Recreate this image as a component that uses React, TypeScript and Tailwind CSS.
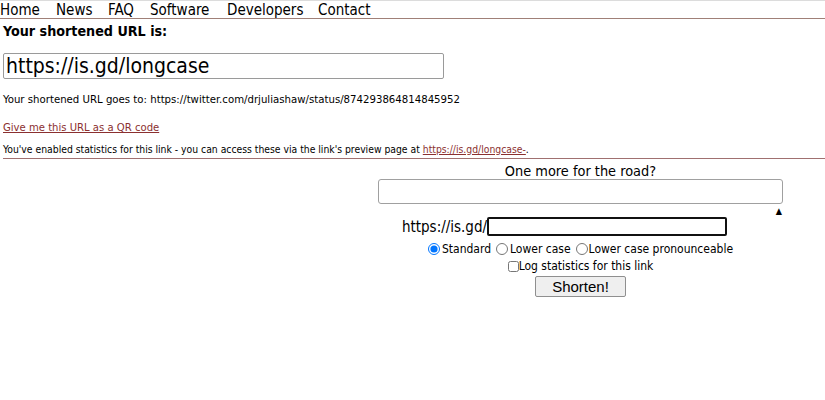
import React from "react";

const cond: React.CSSProperties = {
  fontFamily: '"DejaVu Sans Condensed", "DejaVu Sans", Tahoma, sans-serif',
  fontStretch: "condensed",
};

export default function App() {
  return (
    <div className="w-[825px] h-[400px] bg-white overflow-hidden text-black" style={cond}>
      <div className="border-t border-[#dcdcdc]" />
      <nav className="flex h-[18px] items-center border-b border-[#a08078] text-[15px] leading-[18px]">
        <a className="w-[56px]">Home</a>
        <a className="w-[52px]">News</a>
        <a className="w-[42px]">FAQ</a>
        <a className="w-[77px]">Software</a>
        <a className="w-[91px]">Developers</a>
        <a>Contact</a>
      </nav>
      <div className="px-[3px]">
        <h2 className="mt-[4px] text-[14.2px] font-bold leading-[17px]">Your shortened URL is:</h2>
        <input
          readOnly
          value="https://is.gd/longcase"
          style={cond}
          className="mt-[13px] block h-[26px] w-[441px] rounded-[2px] border border-[#9a9a9a] px-[2px] text-[21px] leading-[24px] outline-none"
        />
        <p className="mt-[14px] text-[11.3px] leading-[14px]">
          Your shortened URL goes to: https://twitter.com/drjuliashaw/status/874293864814845952
        </p>
        <p className="mt-[14px] text-[11.2px] leading-[14px]">
          <a className="text-[#8b3030] underline">Give me this URL as a QR code</a>
        </p>
        <p className="mt-[7px] text-[10.3px] leading-[14px]">
          You've enabled statistics for this link - you can access these via the link's preview page at{" "}
          <a className="text-[#8b3030] underline">https://is.gd/longcase-</a>.
        </p>
      </div>
      <div className="ml-[3px] mt-[2px] border-t border-[#a07070]" />
      <form className="ml-[378px] w-[405px] text-center">
        <div className="mt-[5px] text-[14.4px] leading-[15px]">One more for the road?</div>
        <input className="block h-[25px] w-[405px] rounded-[3px] border border-[#a0a0a0] outline-none" />
        <div className="mt-[2px] flex justify-end pr-[1px] text-[9px] leading-[10px]">▲</div>
        <div className="mr-[32px] mt-[1px] flex items-center justify-center text-[15px] leading-[18px]">
          <span>https://is.gd/</span>
          <input className="h-[19px] w-[240px] rounded-[2px] border-2 border-[#111] outline-none" />
        </div>
        <div className="mt-[5px] flex items-center justify-center text-[12px] leading-[16px]">
          <input type="radio" name="t" defaultChecked className="m-0 mr-[2px] h-[12px] w-[12px] accent-[#0075ff]" />
          <span>Standard</span>
          <input type="radio" name="t" className="m-0 ml-[5px] mr-[2px] h-[12px] w-[12px]" />
          <span>Lower case</span>
          <input type="radio" name="t" className="m-0 ml-[5px] mr-[1px] h-[12px] w-[12px]" />
          <span>Lower case pronounceable</span>
        </div>
        <div className="mt-[1px] flex items-center justify-center text-[12px] leading-[16px]">
          <input type="checkbox" className="m-0 h-[11px] w-[11px]" />
          <span>Log statistics for this link</span>
        </div>
        <div className="mt-[2px] flex justify-center">
          <button type="button" className="h-[21px] w-[91px] rounded-[2px] border border-[#8f8f8f] bg-[#efefef] text-[15px] leading-[19px]" style={{ fontFamily: '"Liberation Sans", Arial, sans-serif' }}>
            Shorten!
          </button>
        </div>
      </form>
    </div>
  );
}
